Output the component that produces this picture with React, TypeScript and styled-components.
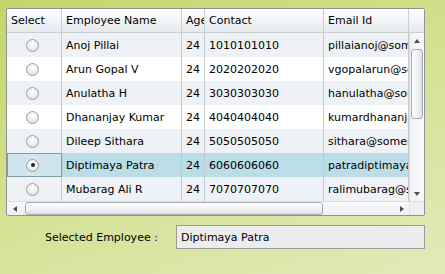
import React from "react";
import styled, { createGlobalStyle } from "styled-components";

const GlobalStyle = createGlobalStyle`
  html, body {
    margin: 0;
    padding: 0;
  }
  body {
    font-family: "DejaVu Sans", Verdana, sans-serif;
    font-size: 11px;
    color: #000;
  }
`;

const Page = styled.div`
  width: 445px;
  height: 274px;
  box-sizing: border-box;
  padding: 8px 20px 0 6px;
  background: linear-gradient(160deg, #c4d56c 0%, #d3e08f 45%, #e2eab9 100%);
  overflow: hidden;
`;

const Frame = styled.div`
  width: 419px;
  height: 208px;
  box-sizing: border-box;
  border: 1px solid #8d9496;
  border-radius: 2px;
  background: #fff;
  display: grid;
  grid-template-columns: 1fr 15px;
  grid-template-rows: 24px 168px 14px;
  overflow: hidden;
`;

const COLS = "55px 120px 23px 119px 85px";

const HeaderRow = styled.div`
  grid-column: 1 / 3;
  display: grid;
  grid-template-columns: ${COLS} 1fr;
  background: linear-gradient(#ffffff, #f3f5f7 50%, #e4e8ec);
  border-bottom: 1px solid #c9ced3;
  box-sizing: border-box;
`;

const HeaderCell = styled.div`
  border-right: 1px solid #c9ced3;
  padding: 0 4px;
  display: flex;
  align-items: center;
  white-space: nowrap;
  overflow: hidden;
  &:last-child {
    border-right: none;
  }
`;

const Body = styled.div`
  overflow: hidden;
`;

const Row = styled.div<{ $bg: string }>`
  display: grid;
  grid-template-columns: ${COLS};
  height: 24px;
  background: ${(p) => p.$bg};
`;

const Cell = styled.div<{ $focus?: boolean }>`
  border-right: 1px solid #c6c9cc;
  padding: 0 4px;
  display: flex;
  align-items: center;
  white-space: nowrap;
  overflow: hidden;
  box-sizing: border-box;
  ${(p) =>
    p.$focus &&
    `
    background: #cfe6ee;
    border: 1px solid #7d9ca6;
  `}
`;

const SelectCell = styled(Cell)`
  justify-content: center;
  padding: 0 4px 0 0;
`;

const Radio = styled.div<{ $checked?: boolean }>`
  width: 13px;
  height: 13px;
  box-sizing: border-box;
  border-radius: 50%;
  border: 1px solid #9a9ea3;
  background: radial-gradient(circle at 50% 35%, #ffffff 0%, #f1f1f1 45%, #d6d8da 100%);
  display: flex;
  align-items: center;
  justify-content: center;
  &::after {
    content: "";
    width: 4px;
    height: 4px;
    border-radius: 50%;
    background: ${(p) => (p.$checked ? "#222" : "transparent")};
  }
`;

const VScroll = styled.div`
  background: linear-gradient(90deg, #f1f2f3, #fafafa);
  border-left: 1px solid #dcdfe2;
  display: flex;
  flex-direction: column;
  align-items: center;
`;

const HScroll = styled.div`
  background: linear-gradient(#fafafa, #eef0f2);
  border-top: 1px solid #dcdfe2;
  display: flex;
  align-items: center;
`;

const Corner = styled.div`
  background: #eef0f2;
  border-top: 1px solid #dcdfe2;
  border-left: 1px solid #dcdfe2;
`;

const Arrow = styled.div`
  width: 15px;
  height: 15px;
  display: flex;
  align-items: center;
  justify-content: center;
  flex-shrink: 0;
`;

const VThumb = styled.div`
  width: 12px;
  height: 70px;
  margin-top: 1px;
  box-sizing: border-box;
  border: 1px solid #a5abb1;
  border-radius: 3px;
  background: linear-gradient(90deg, #ffffff, #eef0f2 60%, #dadde1);
`;

const VSpacer = styled.div`
  flex: 1;
`;

const HThumb = styled.div`
  width: 298px;
  height: 13px;
  margin-left: 3px;
  box-sizing: border-box;
  border: 1px solid #a5abb1;
  border-radius: 3px;
  background: linear-gradient(#ffffff, #eef0f2 60%, #dadde1);
`;

const HSpacer = styled.div`
  flex: 1;
`;

const Footer = styled.div`
  display: flex;
  align-items: center;
  margin-top: 9px;
  padding-left: 39px;
`;

const Label = styled.div`
  width: 131px;
  font-size: 11px;
  white-space: nowrap;
`;

const ValueBox = styled.div`
  width: 249px;
  height: 24px;
  box-sizing: border-box;
  border: 1px solid #9b9b9b;
  background: #ececee;
  padding: 0 4px;
  display: flex;
  align-items: center;
`;

const Tri = ({ dir }: { dir: "up" | "down" | "left" | "right" }) => {
  const pts = {
    up: "0,4 3,0 6,4",
    down: "0,0 6,0 3,4",
    left: "4,0 4,6 0,3",
    right: "0,0 0,6 4,3",
  }[dir];
  const vertical = dir === "up" || dir === "down";
  return (
    <svg width={vertical ? 6 : 4} height={vertical ? 4 : 6}>
      <polygon points={pts} fill="#4a4f55" />
    </svg>
  );
};

const employees = [
  ["Anoj Pillai", "1010101010", "pillaianoj@somemail.com"],
  ["Arun Gopal V", "2020202020", "vgopalarun@somemail.com"],
  ["Anulatha H", "3030303030", "hanulatha@somemail.com"],
  ["Dhananjay Kumar", "4040404040", "kumardhananjay@somemail.com"],
  ["Dileep Sithara", "5050505050", "sithara@somemail.com"],
  ["Diptimaya Patra", "6060606060", "patradiptimaya@somemail.com"],
  ["Mubarag Ali R", "7070707070", "ralimubarag@somemail.com"],
];

const SELECTED = 5;

export default function App() {
  return (
    <>
      <GlobalStyle />
      <Page>
        <Frame>
          <HeaderRow>
            <HeaderCell>Select</HeaderCell>
            <HeaderCell>Employee Name</HeaderCell>
            <HeaderCell>Age</HeaderCell>
            <HeaderCell>Contact</HeaderCell>
            <HeaderCell>Email Id</HeaderCell>
            <HeaderCell />
          </HeaderRow>
          <Body>
            {employees.map(([name, contact, email], i) => {
              const selected = i === SELECTED;
              const bg = selected ? "#bbdde8" : i % 2 === 0 ? "#eef2f6" : "#ffffff";
              return (
                <Row key={name} $bg={bg}>
                  <SelectCell $focus={selected}>
                    <Radio $checked={selected} />
                  </SelectCell>
                  <Cell>{name}</Cell>
                  <Cell>24</Cell>
                  <Cell>{contact}</Cell>
                  <Cell>{email}</Cell>
                </Row>
              );
            })}
          </Body>
          <VScroll>
            <Arrow>
              <Tri dir="up" />
            </Arrow>
            <VThumb />
            <VSpacer />
            <Arrow>
              <Tri dir="down" />
            </Arrow>
          </VScroll>
          <HScroll>
            <Arrow>
              <Tri dir="left" />
            </Arrow>
            <HThumb />
            <HSpacer />
            <Arrow>
              <Tri dir="right" />
            </Arrow>
          </HScroll>
          <Corner />
        </Frame>
        <Footer>
          <Label>Selected Employee :</Label>
          <ValueBox>Diptimaya Patra</ValueBox>
        </Footer>
      </Page>
    </>
  );
}
